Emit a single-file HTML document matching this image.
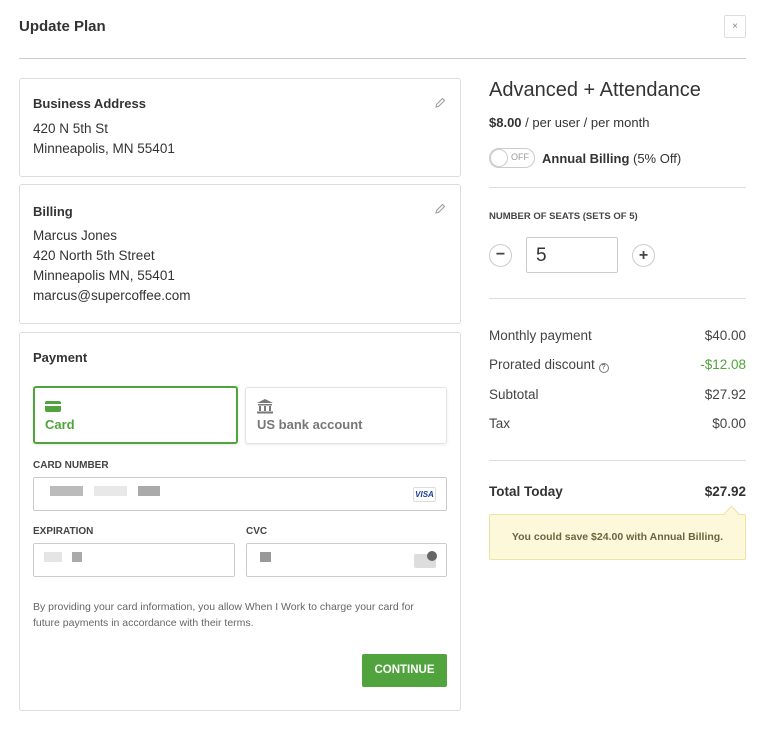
<!DOCTYPE html>
<html><head><style>
*{box-sizing:border-box;margin:0;padding:0}
body{width:768px;height:743px;background:#fff;font-family:"Liberation Sans",sans-serif;color:#333;position:relative;overflow:hidden;font-size:13px}
.a{position:absolute}
.box{position:absolute;left:19px;width:442px;border:1px solid #ddd;border-radius:3px}
.h{font-weight:bold;font-size:13px;color:#333}
.t{font-size:13.5px;color:#333;line-height:20px}
.lbl{font-size:10px;font-weight:bold;color:#444}
.inp{position:absolute;border:1px solid #ccc;border-radius:2px;background:#fff}
.blk{position:absolute;height:10px;background:#aaa}
.row{position:absolute;left:489px;width:257px;font-size:13.5px;color:#444;display:flex;justify-content:space-between}
</style></head><body>
<div class="a" style="left:19px;top:18px;font-size:15px;font-weight:bold;color:#333">Update Plan</div>
<div class="a" style="left:724px;top:15px;width:22px;height:23px;border:1px solid #ddd;border-radius:2px;font-size:10px;color:#888;text-align:center;line-height:21px">×</div>
<div class="a" style="left:19px;top:58px;width:727px;height:1px;background:#ccc"></div>

<div class="box" style="top:78px;height:99px">
<div class="a h" style="left:13px;top:17px">Business Address</div>
<div class="a t" style="left:13px;top:40px">420 N 5th St<br>Minneapolis, MN 55401</div>
<svg class="a" style="left:414px;top:18px" width="12" height="12" viewBox="0 0 12 12"><path d="M2 10 L2.5 7.5 L8.5 1.5 L10.5 3.5 L4.5 9.5 Z" fill="none" stroke="#999" stroke-width="1"/></svg>
</div>
<div class="box" style="top:184px;height:140px">
<div class="a h" style="left:13px;top:19px">Billing</div>
<div class="a t" style="left:13px;top:41px">Marcus Jones<br>420 North 5th Street<br>Minneapolis MN, 55401<br>marcus@supercoffee.com</div>
<svg class="a" style="left:414px;top:18px" width="12" height="12" viewBox="0 0 12 12"><path d="M2 10 L2.5 7.5 L8.5 1.5 L10.5 3.5 L4.5 9.5 Z" fill="none" stroke="#999" stroke-width="1"/></svg>
</div>
<div class="box" style="top:332px;height:379px">
<div class="a h" style="left:13px;top:17px">Payment</div>
<div class="a" style="left:13px;top:53px;width:205px;height:58px;border:2px solid #51a33d;border-radius:3px;box-shadow:0 1px 3px rgba(0,0,0,.1)">
 <div class="a" style="left:10px;top:13px;width:16px;height:11px;background:#51a33d;border-radius:2px"><div class="a" style="left:0;top:3px;width:16px;height:2px;background:#fff"></div></div>
 <div class="a" style="left:10px;top:29px;font-size:13px;font-weight:bold;color:#51a33d">Card</div>
</div>
<div class="a" style="left:225px;top:54px;width:202px;height:57px;border:1px solid #e3e3e3;border-radius:3px;box-shadow:0 1px 3px rgba(0,0,0,.08)">
 <svg class="a" style="left:11px;top:11px" width="16" height="15" viewBox="0 0 16 15"><path d="M8 0 L16 4 L0 4 Z" fill="#777"/><rect x="1" y="5" width="14" height="1.5" fill="#777"/><rect x="2" y="7" width="2" height="5" fill="#777"/><rect x="7" y="7" width="2" height="5" fill="#777"/><rect x="12" y="7" width="2" height="5" fill="#777"/><rect x="0" y="12.5" width="16" height="2" fill="#777"/></svg>
 <div class="a" style="left:11px;top:29px;font-size:13px;font-weight:bold;color:#777">US bank account</div>
</div>
<div class="a lbl" style="left:13px;top:127px">CARD NUMBER</div>
<div class="inp" style="left:13px;top:144px;width:414px;height:34px">
 <div class="blk" style="left:16px;top:8px;width:33px;background:#bbb"></div>
 <div class="blk" style="left:60px;top:8px;width:33px;background:#e8e8e8"></div>
 <div class="blk" style="left:104px;top:8px;width:22px;background:#aaa"></div>
 <div class="a" style="left:379px;top:9px;width:23px;height:15px;border:1px solid #ddd;border-radius:2px;font-size:8px;font-weight:bold;font-style:italic;color:#1a3fa0;text-align:center;line-height:13px">VISA</div>
</div>
<div class="a lbl" style="left:13px;top:193px">EXPIRATION</div>
<div class="a lbl" style="left:226px;top:193px">CVC</div>
<div class="inp" style="left:13px;top:210px;width:202px;height:34px">
 <div class="blk" style="left:10px;top:8px;width:18px;background:#e5e5e5"></div>
 <div class="blk" style="left:38px;top:8px;width:10px;background:#aaa"></div>
</div>
<div class="inp" style="left:226px;top:210px;width:201px;height:34px">
 <div class="blk" style="left:13px;top:8px;width:11px;background:#999"></div>
 <div class="a" style="left:167px;top:10px;width:22px;height:14px;background:#ddd;border-radius:2px"></div>
 <div class="a" style="left:180px;top:7px;width:10px;height:10px;background:#666;border-radius:50%"></div>
</div>
<div class="a" style="left:13px;top:266px;font-size:10.5px;color:#666;line-height:16px;width:410px">By providing your card information, you allow When I Work to charge your card for future payments in accordance with their terms.</div>
<div class="a" style="left:342px;top:321px;width:85px;height:33px;background:#51a33d;border-radius:2px;color:#fff;font-size:11.5px;font-weight:bold;text-align:center;line-height:33px">CONTINUE</div>
</div>

<div class="a" style="left:489px;top:79px;font-size:20px;color:#333">Advanced + Attendance</div>
<div class="a" style="left:489px;top:115px;font-size:13px;color:#333"><b>$8.00</b> / per user / per month</div>
<div class="a" style="left:489px;top:148px;width:46px;height:20px;border:1px solid #ccc;border-radius:10px">
 <div class="a" style="left:0;top:0;width:18px;height:18px;border-radius:50%;border:1px solid #ccc;background:#fff"></div>
 <div class="a" style="left:21px;top:3px;font-size:9px;color:#999">OFF</div>
</div>
<div class="a" style="left:542px;top:151px;font-size:13px;color:#333"><b>Annual Billing</b> (5% Off)</div>
<div class="a" style="left:489px;top:187px;width:257px;height:1px;background:#ddd"></div>
<div class="a" style="left:489px;top:211px;font-size:9.5px;font-weight:bold;color:#444">NUMBER OF SEATS (SETS OF 5)</div>
<div class="a" style="left:489px;top:244px;width:23px;height:23px;border:1px solid #ccc;border-radius:50%;text-align:center;line-height:20px;font-size:16px;font-weight:bold;color:#444">−</div>
<div class="a" style="left:526px;top:237px;width:92px;height:36px;border:1px solid #ccc;border-radius:2px;font-size:19px;padding-left:9px;line-height:36px;color:#333">5</div>
<div class="a" style="left:632px;top:244px;width:23px;height:23px;border:1px solid #ccc;border-radius:50%;text-align:center;line-height:21px;font-size:16px;font-weight:bold;color:#444">+</div>
<div class="a" style="left:489px;top:298px;width:257px;height:1px;background:#ddd"></div>
<div class="row" style="top:328px"><span>Monthly payment</span><span>$40.00</span></div>
<div class="row" style="top:357px"><span>Prorated discount <span style="display:inline-block;width:10px;height:10px;border:1px solid #777;border-radius:50%;font-size:7px;text-align:center;line-height:8px">?</span></span><span style="color:#51a33d">-$12.08</span></div>
<div class="row" style="top:387px"><span>Subtotal</span><span>$27.92</span></div>
<div class="row" style="top:416px"><span>Tax</span><span>$0.00</span></div>
<div class="a" style="left:489px;top:460px;width:257px;height:1px;background:#ddd"></div>
<div class="row" style="top:484px;font-weight:bold;color:#333"><span>Total Today</span><span>$27.92</span></div>
<div class="a" style="left:489px;top:514px;width:257px;height:46px;background:#fcf8d9;border:1px solid #eee2a8;border-radius:2px;font-size:10.5px;font-weight:bold;color:#6b6440;text-align:center;line-height:44px">You could save $24.00 with Annual Billing.</div>
<div class="a" style="left:726px;top:508px;width:11px;height:11px;background:#fcf8d9;border-left:1px solid #eee2a8;border-top:1px solid #eee2a8;transform:rotate(45deg)"></div>
</body></html>
